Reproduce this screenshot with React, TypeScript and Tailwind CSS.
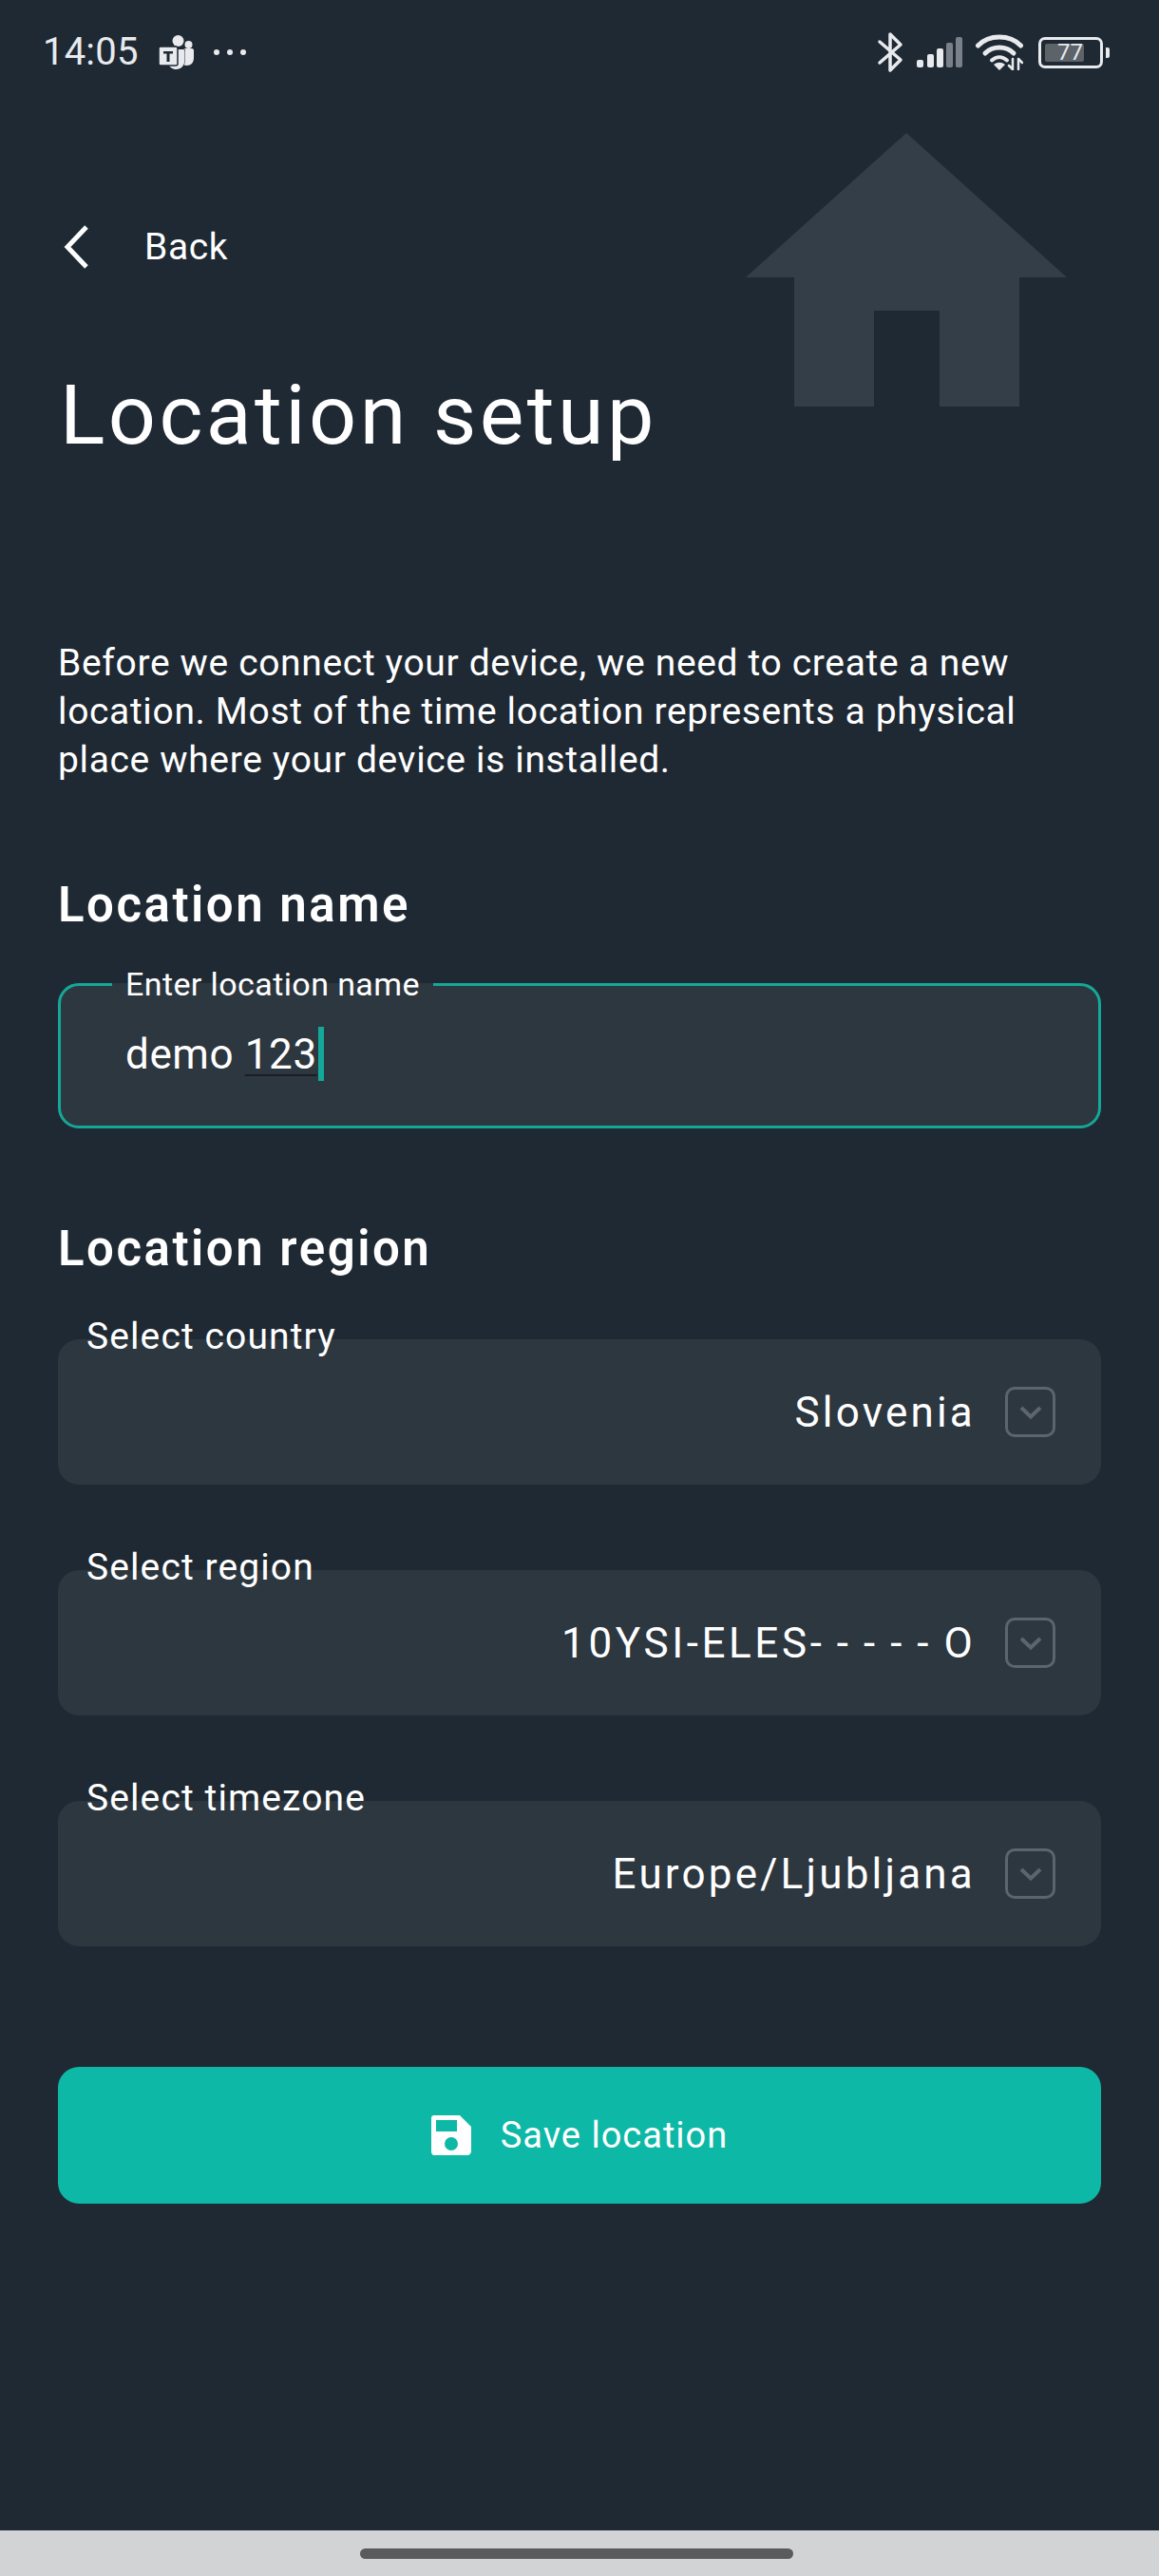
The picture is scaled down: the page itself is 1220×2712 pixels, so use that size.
const font = "font-['Roboto',sans-serif]";

const TeamsIcon = () => (
  <svg width="40" height="40" viewBox="0 0 40 40" fill="#e8eaed">
    <circle cx="21.5" cy="8" r="6" />
    <circle cx="32.5" cy="12" r="4" />
    <path d="M27 16h9c1 0 2 1 2 2v8c0 5-3 8-7.500 8-1 0-2-.2-2.800-.5 1-2 1.300-4 1.300-6V18c0-.8-.7-2-2-2z" />
    <path d="M13 17h14c1 0 1.500.8 1.500 2v9c0 6-4 10-9 10-4 0-7.500-2.500-8.500-6h4V17z" />
    <rect x="1" y="14" width="20" height="20" rx="2" fill="#e8eaed" stroke="#1f2933" strokeWidth="1.500" />
    <path d="M6 19h10v2.500h-3.500V30h-3v-8.500H6z" fill="#1f2933" />
  </svg>
);

const StatusBar = () => (
  <div className={`flex h-[100px] shrink-0 items-center justify-between pl-[45px] pr-[52px] pt-[10px] ${font} text-[#e8eaed]`}>
    <div className="flex items-center">
      <span className="text-[40px] leading-none tracking-[0.2px]">14:05</span>
      <span className="ml-[20px] flex"><TeamsIcon /></span>
      <span className="ml-[19px] flex gap-[8px]">
        <span className="h-[6px] w-[6px] rounded-full bg-[#e8eaed]" />
        <span className="h-[6px] w-[6px] rounded-full bg-[#e8eaed]" />
        <span className="h-[6px] w-[6px] rounded-full bg-[#e8eaed]" />
      </span>
    </div>
    <div className="flex items-center">
      <svg width="28" height="44" viewBox="0 0 28 44" fill="none" stroke="#e8eaed" strokeWidth="3.500" strokeLinejoin="round" strokeLinecap="round">
        <path d="M3 11 L25 30 L14 41 V3 L25 14 L3 33" />
      </svg>
      <svg className="ml-[13px]" width="50" height="34" viewBox="0 0 50 34">
        <rect x="1" y="25" width="7" height="8" rx="2" fill="#e8eaed" />
        <rect x="12" y="19" width="7" height="14" rx="2" fill="#e8eaed" />
        <rect x="22" y="13" width="7" height="20" rx="2" fill="#e8eaed" />
        <rect x="32" y="7" width="7" height="26" rx="2" fill="#7a8087" />
        <rect x="42" y="1" width="7" height="32" rx="2" fill="#7a8087" />
      </svg>
      <svg className="ml-[13px]" width="50" height="38" viewBox="0 0 50 38" fill="none" stroke="#e8eaed" strokeLinecap="round">
        <path d="M2.500 12 C14 0 36 0 47.500 12" strokeWidth="5" />
        <path d="M10 20 C18 12 32 12 40 20" strokeWidth="5" />
        <path d="M17 27.500 C22 23 28 23 33 27.500" strokeWidth="4" />
        <path d="M19 32 L25 38 L31 32 C27 29 23 29 19 32Z" fill="#e8eaed" stroke="none" />
        <path d="M39 26 V37 M39 37 L35 33 M45 37 V26 M45 26 L49 30" strokeWidth="2.500" />
      </svg>
      <div className="ml-[16px] flex items-center">
        <div className="relative flex h-[33px] w-[68px] items-center rounded-[7px] border-[3px] border-[#e8eaed] p-[4px]">
          <div className="h-full w-[41px] rounded-[2px] bg-[#5c6369]" />
          <span className="absolute left-[17px] text-[24px] leading-none text-[#e8eaed]">77</span>
        </div>
        <div className="ml-[3px] h-[11px] w-[4px] rounded-r-[2px] bg-[#e8eaed]" />
      </div>
    </div>
  </div>
);

const SelectField = ({ label, value }: { label: string; value: React.ReactNode }) => (
  <div className="relative pt-[6px]">
    <span className="absolute left-[30px] top-[-22px] text-[39px] leading-[50px] tracking-[1.100px] text-white">{label}</span>
    <div className="flex h-[153px] items-center justify-end rounded-[22px] bg-[#2d3740] pr-[48px]">
      <span className="text-[44px] tracking-[3.200px] text-white">{value}</span>
      <div className="ml-[31px] flex h-[53px] w-[53px] items-center justify-center rounded-[10px] border-[3px] border-[#5d656c]">
        <svg width="24" height="16" viewBox="0 0 24 16" fill="none" stroke="#5d656c" strokeWidth="4">
          <path d="M2 3 L12 12.500 L22 3" />
        </svg>
      </div>
    </div>
  </div>
);

export default function App() {
  return (
    <div className={`relative flex h-[2712px] w-[1220px] flex-col overflow-hidden bg-[#1f2933] ${font}`}>
      <StatusBar />

      {/* house behind the header */}
      <svg className="absolute left-[785px] top-[140px]" width="338" height="288" viewBox="0 0 338 288" fill="#343e48">
        <path d="M169 0 L338 152 H288 V288 H204 V187 H135 V288 H51 V152 H0 Z" />
      </svg>

      <div className="relative flex flex-1 flex-col px-[61px]">
        <div className="mt-[135px] flex h-[50px] items-center">
          <svg className="ml-[6px]" width="27" height="46" viewBox="0 0 27 46" fill="none" stroke="#fff" strokeWidth="5">
            <path d="M24 2 L4 23 L24 44" />
          </svg>
          <span className="ml-[58px] text-[39px] tracking-[0.6px] text-white">Back</span>
        </div>

        <h1 className="ml-[2px] mt-[100px] text-[88px] font-normal leading-[104px] tracking-[3.400px] text-white">Location setup</h1>

        <p className="mt-[184px] text-[39px] leading-[51px] tracking-[0.650px] text-white">
          Before we connect your device, we need to create a new
          <br />
          location. Most of the time location represents a physical
          <br />
          place where your device is installed.
        </p>

        <h2 className="mt-[97px] text-[51px] font-semibold leading-[60px] tracking-[2.500px] text-white">Location name</h2>

        <fieldset className="mt-[35px] h-[170px] rounded-[22px] border-[3px] border-[#14a899] bg-[#2d3740] pl-[54px]">
          <legend className="px-[14px] text-[34px] leading-[36px] tracking-[0.400px] text-white">Enter location name</legend>
          <div className="mt-[27px] flex items-center pl-[14px]">
            <span className="text-[44px] leading-[52px] tracking-[0.600px] text-white">
              demo <span className="underline decoration-[#1b1e24] decoration-[2px] underline-offset-[6px]">123</span>
            </span>
            <span className="ml-[1px] h-[57px] w-[6px] bg-[#14a899]" />
          </div>
        </fieldset>

        <h2 className="mt-[97px] text-[51px] font-semibold leading-[60px] tracking-[2.500px] text-white">Location region</h2>

        <div className="mt-[59px] flex flex-col gap-[84px]">
          <SelectField label="Select country" value="Slovenia" />
          <SelectField
            label="Select region"
            value={
              <>
                <span className="tracking-[3.600px]">10YSI-ELES</span>
                <span className="tracking-[16px]">-----</span>
                O
              </>
            }
          />
          <SelectField label="Select timezone" value="Europe/Ljubljana" />
        </div>

        <button className="mt-[127px] flex h-[144px] items-center justify-center rounded-[22px] bg-[#0db8a6] text-white">
          <svg width="42" height="42" viewBox="0 0 42 42" fill="#fff">
            <path fillRule="evenodd" d="M3 0H30L42 12V38C42 40 40 42 38 42H3C1 42 0 40 0 38V3C0 1 1 0 3 0ZM5 5V17H27V5ZM21 23A7 7 0 1 0 21 37A7 7 0 1 0 21 23Z" />
          </svg>
          <span className="ml-[31px] text-[38px] tracking-[1px]">Save location</span>
        </button>
      </div>

      <div className="flex h-[48px] shrink-0 items-center justify-center bg-[#d2d3d5] pr-[6px]">
        <div className="h-[11px] w-[456px] rounded-full bg-[#5a5b5d]" />
      </div>
    </div>
  );
}
